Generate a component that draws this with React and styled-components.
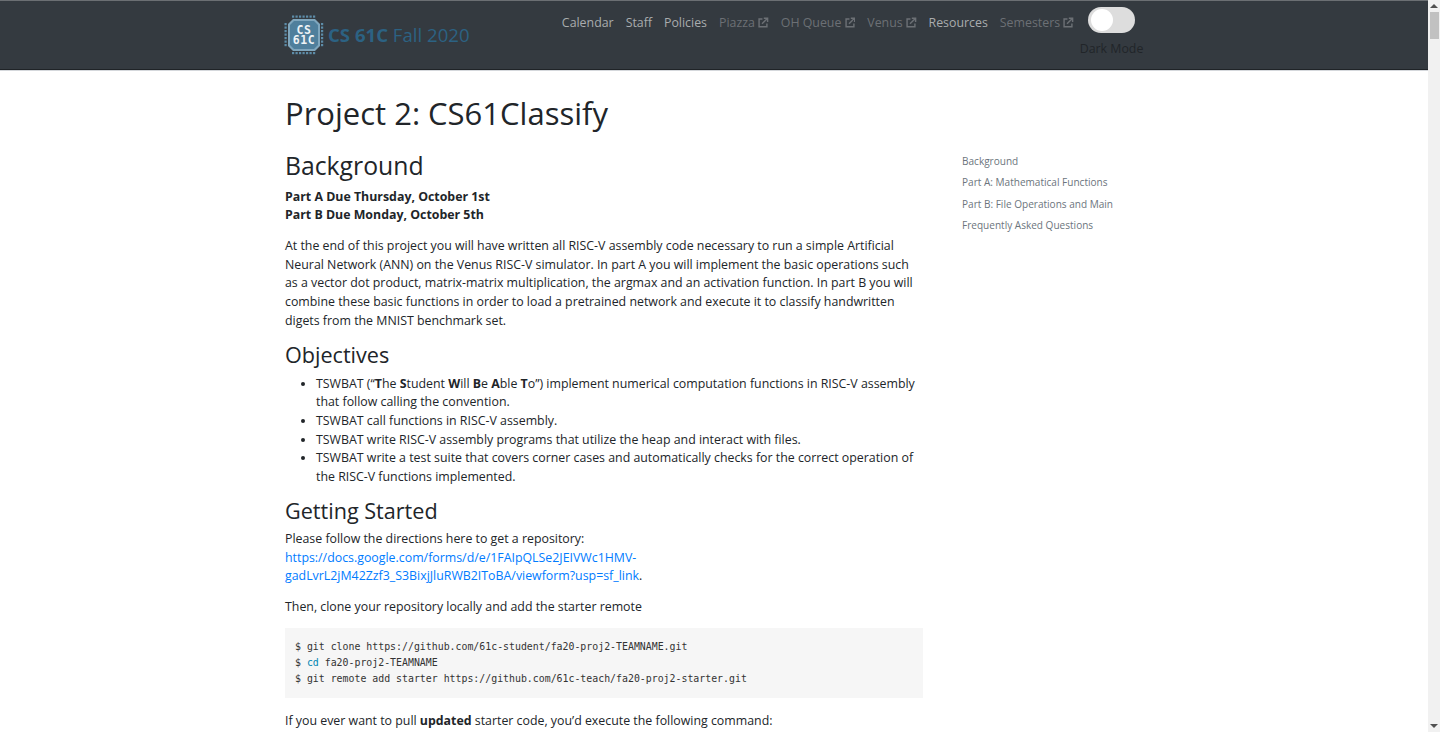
import React from "react"
import styled, { createGlobalStyle } from "styled-components"

const GlobalStyle = createGlobalStyle`
    * {
        box-sizing: border-box;
    }
    html, body {
        margin: 0;
        height: 100%;
        overflow: hidden;
    }
    body {
        font-family: "Open Sans", sans-serif;
        font-size: 12.37px;
        line-height: 18.67px;
        color: #212529;
        background: #fff;
    }
`

function ExternalIcon() {
    return (
        <IconSvg viewBox="0 0 12 12" fill="none" stroke="currentColor" strokeWidth="1.6">
            <path d="M5 2H1.2v8.8H10V7" />
            <path d="M4.5 7.5L10.5 1.5M6.5 1.2H10.8V5.5" />
        </IconSvg>
    )
}

function Logo() {
    return (
        <LogoSvg viewBox="0 0 40 40">
            <g fill="#5d8ca8">
                {[8, 11.5, 15, 18.5, 22, 25.5, 29].map((p) => (
                    <g key={p}>
                        <rect x={p} y="0.5" width="2.2" height="2.2" />
                        <rect x={p} y="37" width="2.2" height="2.2" />
                        <rect x="0.5" y={p} width="2.2" height="2.2" />
                        <rect x="37" y={p} width="2.2" height="2.2" />
                    </g>
                ))}
            </g>
            <path d="M9 4H31L36 9V31L31 36H9L4 31V9Z" fill="#7fa6bd" />
            <path d="M10 6H30L34 10V30L30 34H10L6 30V10Z" fill="#4f7f9c" />
            <text x="20" y="19" textAnchor="middle" fontFamily="DejaVu Sans Mono, monospace" fontWeight="700" fontSize="11.5" letterSpacing="0.6" fill="#eef3f6">CS</text>
            <text x="20" y="29" textAnchor="middle" fontFamily="DejaVu Sans Mono, monospace" fontWeight="700" fontSize="11.5" letterSpacing="0.6" fill="#eef3f6">61C</text>
        </LogoSvg>
    )
}

export default function App() {
    return (
        <Screen>
            <GlobalStyle />
            <Page>
                <Navbar>
                    <NavInner>
                        <Brand>
                            <Logo />
                            <BrandText><b>CS 61C</b> Fall 2020</BrandText>
                        </Brand>
                        <NavLinks>
                            <NavLink>Calendar</NavLink>
                            <NavLink>Staff</NavLink>
                            <NavLink>Policies</NavLink>
                            <NavLink $muted>Piazza <ExternalIcon /></NavLink>
                            <NavLink $muted>OH Queue <ExternalIcon /></NavLink>
                            <NavLink $muted>Venus <ExternalIcon /></NavLink>
                            <NavLink>Resources</NavLink>
                            <NavLink $muted>Semesters <ExternalIcon /></NavLink>
                        </NavLinks>
                        <ToggleBox>
                            <Toggle><Knob /></Toggle>
                            <ToggleLabel>Dark Mode</ToggleLabel>
                        </ToggleBox>
                    </NavInner>
                </Navbar>
                <Content>
                    <Article>
                        <Title>Project 2: CS61Classify</Title>
                        <SectionTitle>Background</SectionTitle>
                        <Para>
                            <b>Part A Due Thursday, October 1st</b><br />
                            <b>Part B Due Monday, October 5th</b>
                        </Para>
                        <Para>
                            At the end of this project you will have written all RISC-V assembly code necessary to run a simple Artificial Neural Network (ANN) on the Venus RISC-V simulator. In part A you will implement the basic operations such as a vector dot product, matrix-matrix multiplication, the argmax and an activation function. In part B you will combine these basic functions in order to load a pretrained network and execute it to classify handwritten digets from the MNIST benchmark set.
                        </Para>
                        <SubTitle>Objectives</SubTitle>
                        <BulletList>
                            <li>TSWBAT (“<b>T</b>he <b>S</b>tudent <b>W</b>ill <b>B</b>e <b>A</b>ble <b>T</b>o”) implement numerical computation functions in RISC-V assembly that follow calling the convention.</li>
                            <li>TSWBAT call functions in RISC-V assembly.</li>
                            <li>TSWBAT write RISC-V assembly programs that utilize the heap and interact with files.</li>
                            <li>TSWBAT write a test suite that covers corner cases and automatically checks for the correct operation of the RISC-V functions implemented.</li>
                        </BulletList>
                        <SubTitle>Getting Started</SubTitle>
                        <Para>
                            Please follow the directions here to get a repository:<br />
                            <DocLink>https://docs.google.com/forms/d/e/1FAIpQLSe2JEIVWc1HMV-gadLvrL2jM42Zzf3_S3BixjJluRWB2IToBA/viewform?usp=sf_link</DocLink>.
                        </Para>
                        <Para>Then, clone your repository locally and add the starter remote</Para>
                        <CodeBlock>
                            <div>$ git clone https://github.com/61c-student/fa20-proj2-TEAMNAME.git</div>
                            <div>$ <Builtin>cd</Builtin> fa20-proj2-TEAMNAME</div>
                            <div>$ git remote add starter https://github.com/61c-teach/fa20-proj2-starter.git</div>
                        </CodeBlock>
                        <Para>If you ever want to pull <b>updated</b> starter code, you’d execute the following command:</Para>
                    </Article>
                    <Toc>
                        <TocItem>Background</TocItem>
                        <TocItem>Part A: Mathematical Functions</TocItem>
                        <TocItem>Part B: File Operations and Main</TocItem>
                        <TocItem>Frequently Asked Questions</TocItem>
                    </Toc>
                </Content>
            </Page>
            <Scrollbar>
                <Arrow $up />
                <Track><Thumb /></Track>
                <Arrow />
            </Scrollbar>
        </Screen>
    )
}

const Screen = styled.div`
    display: flex;
    height: 732px;
    overflow: hidden;
`
const Page = styled.div`
    flex: 1;
    min-width: 0;
    overflow: hidden;
`
const Navbar = styled.nav`
    height: 70px;
    background: #343a40;
    border-top: 1px solid #6b6f73;
    border-bottom: 1px solid #1f2327;
    box-shadow: 0 1px 0 #d5d8dc;
`
const NavInner = styled.div`
    width: 888px;
    margin-left: 270px;
    padding: 0 15px 0 14px;
    display: flex;
    align-items: flex-start;
`
const Brand = styled.div`
    display: flex;
    align-items: center;
    height: 68px;
    gap: 4px;
    flex-shrink: 0;
`
const LogoSvg = styled.svg`
    width: 40px;
    height: 40px;
`
const BrandText = styled.span`
    font-size: 18.6px;
    color: #2c6283;
    white-space: nowrap;
    b {
        font-weight: 700;
    }
`
const NavLinks = styled.div`
    display: flex;
    gap: 12px;
    padding-top: 12px;
    margin-left: auto;
`
const NavLink = styled.span`
    font-size: 12.37px;
    line-height: 20px;
    color: ${(props) => (props.$muted ? "#6c7075" : "#a9acae")};
    white-space: nowrap;
`
const IconSvg = styled.svg`
    width: 10.7px;
    height: 11px;
    vertical-align: -1px;
`
const ToggleBox = styled.div`
    display: flex;
    flex-direction: column;
    width: 63px;
    margin-left: 6px;
    padding-top: 6px;
    align-items: center;
`
const Toggle = styled.div`
    width: 47px;
    height: 26px;
    border-radius: 13px;
    background: #ddd;
    padding: 2px 3px;
`
const Knob = styled.div`
    width: 22px;
    height: 22px;
    border-radius: 50%;
    background: #fff;
`
const ToggleLabel = styled.div`
    margin-top: 7px;
    font-size: 12.37px;
    color: #212529;
    white-space: nowrap;
`
const Content = styled.div`
    display: flex;
    width: 888px;
    margin-left: 270px;
    padding: 0 15px;
`
const Article = styled.main`
    width: 638px;
    flex-shrink: 0;
    padding-top: 22px;
`
const Title = styled.h1`
    margin: 0 0 20px;
    font-size: 31px;
    line-height: 42px;
    font-weight: 400;
`
const SectionTitle = styled.h2`
    margin: -3px 0 6.5px;
    font-size: 24.75px;
    line-height: 30px;
    font-weight: 400;
`
const SubTitle = styled.h3`
    margin: -0.5px 0 6.5px;
    font-size: 21.6px;
    line-height: 26px;
    font-weight: 400;
`
const Para = styled.p`
    margin: 0 0 12.2px;
    b {
        font-weight: 700;
    }
`
const BulletList = styled.ul`
    margin: 0 0 11.5px;
    padding-left: 31px;
    b {
        font-weight: 700;
    }
`
const DocLink = styled.a`
    color: #007bff;
    overflow-wrap: anywhere;
`
const CodeBlock = styled.pre`
    margin: -1px 0 14px;
    padding: 11px 10px;
    background: #f6f6f6;
    font-family: "DejaVu Sans Mono", monospace;
    font-size: 9.9px;
    line-height: 16px;
    color: #333;
`
const Builtin = styled.span`
    color: #0086b3;
`
const Toc = styled.aside`
    margin-left: 39px;
    padding-top: 81px;
`
const TocItem = styled.div`
    font-size: 10.05px;
    line-height: 21.33px;
    color: #6c757d;
    white-space: nowrap;
`
const Scrollbar = styled.div`
    width: 12px;
    background: #f1f1f1;
    display: flex;
    flex-direction: column;
    flex-shrink: 0;
`
const Arrow = styled.div`
    height: 12px;
    flex-shrink: 0;
    display: flex;
    align-items: center;
    justify-content: center;
    &::after {
        content: "";
        border-left: 4px solid transparent;
        border-right: 4px solid transparent;
        ${(props) => (props.$up ? "border-bottom: 4px solid #505050;" : "border-top: 4px solid #505050;")}
    }
`
const Track = styled.div`
    flex: 1;
    padding: 0 1px 0 2px;
`
const Thumb = styled.div`
    height: 27px;
    background: #c1c1c1;
`
